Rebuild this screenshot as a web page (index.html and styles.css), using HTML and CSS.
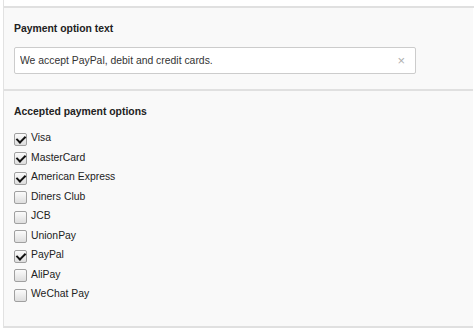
FILE: index.html
```html
<!DOCTYPE html>
<html lang="en">
<head>
    <meta charset="UTF-8">
    <title>Payment options</title>
    <link rel="stylesheet" href="styles.css">
</head>
<body>
<div id="panel">
    <div class="section topSection"></div>
    <div class="section">
        <h3>Payment option text</h3>
        <div class="inputWrap">
            <input type="text" value="We accept PayPal, debit and credit cards.">
            <span class="clear">&times;</span>
        </div>
    </div>
    <div class="section optionsSection">
        <h3>Accepted payment options</h3>
        <ul class="options">
            <li><span class="box checked"></span>Visa</li>
            <li><span class="box checked"></span>MasterCard</li>
            <li><span class="box checked"></span>American Express</li>
            <li><span class="box"></span>Diners Club</li>
            <li><span class="box"></span>JCB</li>
            <li><span class="box"></span>UnionPay</li>
            <li><span class="box checked"></span>PayPal</li>
            <li><span class="box"></span>AliPay</li>
            <li><span class="box"></span>WeChat Pay</li>
        </ul>
    </div>
</div>
</body>
</html>
```

FILE: styles.css
```css
body {
    margin: 0;
    padding: 0;
    background-color: #ffffff;
    font-family: 'Liberation Sans', Arial, sans-serif;
    font-size: 10.4px;
    color: #333333;
}
#panel {
    margin-left: 3px;
    width: 469px;
    border-left: 1px solid #e2e2e2;
    background-color: #f9f9f9;
}
.section {
    border-bottom: 2px solid #e0e0e0;
    padding: 0 10px;
}
.topSection {
    height: 6px;
    background-color: #ffffff;
    margin-right: -2px;
}
h3 {
    margin: 0;
    padding-top: 14px;
    font-size: 10.4px;
    font-weight: bold;
    color: #222222;
    line-height: 14px;
}
.inputWrap {
    position: relative;
    width: 402px;
    margin: 11px 0 15px 0;
}
.inputWrap input {
    box-sizing: border-box;
    width: 100%;
    height: 27px;
    border: 1px solid #cccccc;
    border-radius: 2px;
    background: #ffffff;
    padding: 0 20px 0 5px;
    font-family: 'Liberation Sans', Arial, sans-serif;
    font-size: 10.4px;
    color: #333333;
    outline: none;
}
.clear {
    position: absolute;
    right: 11px;
    top: 6px;
    font-size: 13px;
    color: #b0b0b0;
}
.optionsSection {
    height: 235px;
}
.options {
    list-style: none;
    margin: 9px 0 0 0;
    padding: 0;
}
.options li {
    display: flex;
    align-items: center;
    height: 19.5px;
    color: #222222;
}
.box {
    box-sizing: border-box;
    width: 13px;
    height: 13px;
    margin: 3px 4px 0 0;
    border: 1px solid #a0a0a0;
    border-radius: 2px;
    background: linear-gradient(#fbfbfb, #dedede);
    position: relative;
}
.box.checked::after {
    content: "";
    position: absolute;
    left: 3px;
    top: 0px;
    width: 4px;
    height: 7px;
    border: solid #111111;
    border-width: 0 2px 2px 0;
    transform: rotate(45deg);
}
```
